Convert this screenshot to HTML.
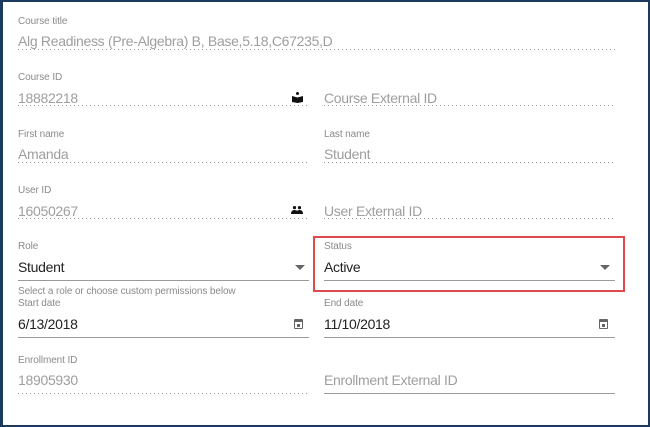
<!DOCTYPE html>
<html><head><style>
*{margin:0;padding:0;box-sizing:border-box}
body{width:650px;height:427px;background:#fff;font-family:"Liberation Sans",sans-serif;position:relative;overflow:hidden}
.frame{position:absolute;left:0;top:0;width:650px;height:427px;border:2px solid #1b3a5e;border-left-width:3px}
.t{position:absolute;white-space:nowrap}
.l{font-size:10px;color:#8a8a8a;line-height:12px;letter-spacing:-0.1px}
.v{font-size:14px;color:#9e9e9e;line-height:16px;letter-spacing:-0.3px}
.d{color:#222}
.dot{position:absolute;height:1px;background-image:linear-gradient(to right,#999 1px,transparent 1px);background-size:4px 1px}
.sol{position:absolute;height:0;border-top:1px solid #9a9a9a}
.arr{position:absolute;width:0;height:0;border-left:5px solid transparent;border-right:5px solid transparent;border-top:5px solid #666}
.cal{position:absolute;width:9px;height:10px;border:1.5px solid #666;border-top-width:3px;border-radius:1px}
.cal:after{content:"";position:absolute;left:1.5px;top:2px;width:3px;height:3px;background:#666}
</style></head><body>
<div class="frame"></div>

<div class="t l" style="left:18px;top:16px">Course title</div>
<div class="t v" style="left:18px;top:33px">Alg Readiness (Pre-Algebra) B, Base,5.18,C67235,D</div>
<div class="dot" style="left:18px;top:49px;width:597px"></div>

<div class="t l" style="left:18px;top:72px">Course ID</div>
<div class="t v" style="left:18px;top:90px">18882218</div>
<svg class="t" style="left:292px;top:92px" width="11" height="11" viewBox="0 0 11 11"><circle cx="5.5" cy="1.5" r="1.5" fill="#111"/><path d="M0 4 L5.5 5.5 L11 4 L11 10 L5.5 11 L0 10Z" fill="#111"/></svg>
<div class="dot" style="left:18px;top:105px;width:291px"></div>
<div class="t v" style="left:324px;top:90px">Course External ID</div>
<div class="dot" style="left:324px;top:105px;width:291px"></div>

<div class="t l" style="left:18px;top:129px">First name</div>
<div class="t v" style="left:18px;top:146px">Amanda</div>
<div class="dot" style="left:18px;top:162px;width:291px"></div>
<div class="t l" style="left:324px;top:129px">Last name</div>
<div class="t v" style="left:324px;top:146px">Student</div>
<div class="dot" style="left:324px;top:162px;width:291px"></div>

<div class="t l" style="left:18px;top:185px">User ID</div>
<div class="t v" style="left:18px;top:203px">16050267</div>
<svg class="t" style="left:291px;top:206px" width="12" height="8" viewBox="0 0 12 8"><circle cx="3.5" cy="1.6" r="1.6" fill="#111"/><circle cx="8.5" cy="1.6" r="1.6" fill="#111"/><path d="M0 8 Q0 4 3.5 4 Q7 4 7 8Z M5 8 Q5 4 8.5 4 Q12 4 12 8Z" fill="#111"/></svg>
<div class="dot" style="left:18px;top:218px;width:291px"></div>
<div class="t v" style="left:324px;top:203px">User External ID</div>
<div class="dot" style="left:324px;top:218px;width:291px"></div>

<div class="t l" style="left:18px;top:241px">Role</div>
<div class="t v d" style="left:18px;top:259px">Student</div>
<div class="arr" style="left:295px;top:265px"></div>
<div class="sol" style="left:18px;top:280px;width:291px"></div>
<div class="t l" style="left:18px;top:286px">Select a role or choose custom permissions below</div>

<div style="position:absolute;left:313px;top:236px;width:312px;height:56px;border:2px solid #e04a4a"></div>
<div class="t l" style="left:324px;top:241px">Status</div>
<div class="t v d" style="left:324px;top:259px">Active</div>
<div class="arr" style="left:600px;top:265px"></div>
<div class="sol" style="left:324px;top:280px;width:291px"></div>

<div class="t l" style="left:18px;top:298px">Start date</div>
<div class="t v d" style="left:18px;top:316px">6/13/2018</div>
<div class="cal" style="left:294px;top:319px"></div>
<div class="sol" style="left:18px;top:337px;width:291px"></div>
<div class="t l" style="left:324px;top:298px">End date</div>
<div class="t v d" style="left:324px;top:316px">11/10/2018</div>
<div class="cal" style="left:599px;top:319px"></div>
<div class="sol" style="left:324px;top:337px;width:291px"></div>

<div class="t l" style="left:18px;top:355px">Enrollment ID</div>
<div class="t v" style="left:18px;top:372px">18905930</div>
<div class="dot" style="left:18px;top:393px;width:291px"></div>
<div class="t v" style="left:324px;top:372px">Enrollment External ID</div>
<div class="sol" style="left:324px;top:393px;width:291px"></div>
</body></html>
